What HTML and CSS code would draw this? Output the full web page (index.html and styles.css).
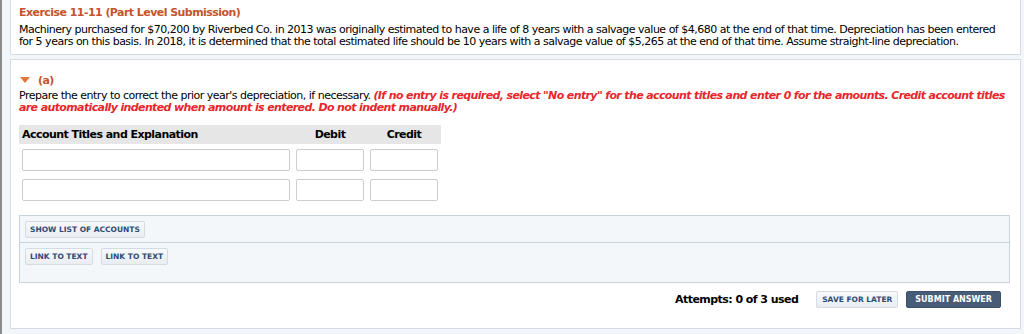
FILE: index.html
```html
<!DOCTYPE html>
<html lang="en">

<head>
    <meta charset="UTF-8">
    <title>Exercise 11-11</title>
    <link rel="stylesheet" href="styles.css">
</head>

<body>
    <div class="page">
        <div class="panel intro">
            <h3 class="title">Exercise 11-11 (Part Level Submission)</h3>
            <p class="text">Machinery purchased for $70,200 by Riverbed Co. in 2013 was originally estimated to have a life of 8 years with a salvage value of $4,680 at the end of that time. Depreciation has been entered for 5 years on this basis. In 2018, it is determined that the total estimated life should be 10 years with a salvage value of $5,265 at the end of that time. Assume straight-line depreciation.</p>
        </div>

        <div class="panel part">
            <div class="part-head">
                <span class="arrow"></span>
                <span class="part-label">(a)</span>
            </div>
            <p class="text">Prepare the entry to correct the prior year's depreciation, if necessary. <em class="warn">(If no entry is required, select "No entry" for the account titles and enter 0 for the amounts. Credit account titles are automatically indented when amount is entered. Do not indent manually.)</em></p>

            <div class="journal">
                <div class="jhead">
                    <div class="jcol-acc">Account Titles and Explanation</div>
                    <div class="jcol-num">Debit</div>
                    <div class="jcol-num">Credit</div>
                </div>
                <div class="jrow">
                    <input type="text" class="inp">
                    <input type="text" class="inp">
                    <input type="text" class="inp">
                </div>
                <div class="jrow">
                    <input type="text" class="inp">
                    <input type="text" class="inp">
                    <input type="text" class="inp">
                </div>
            </div>

            <div class="tools">
                <div class="tools-row">
                    <button class="btn">SHOW LIST OF ACCOUNTS</button>
                </div>
                <div class="tools-row last">
                    <button class="btn">LINK TO TEXT</button>
                    <button class="btn">LINK TO TEXT</button>
                </div>
            </div>

            <div class="submit-bar">
                <span class="attempts">Attempts: 0 of 3 used</span>
                <button class="btn save">SAVE FOR LATER</button>
                <button class="btn submit">SUBMIT ANSWER</button>
            </div>
        </div>
    </div>
</body>

</html>
```

FILE: styles.css
```css
* {
    padding: 0;
    margin: 0;
    box-sizing: border-box;
}

body {
    background-color: #f3f6f9;
    font-family: "DejaVu Sans", Verdana, sans-serif;
    font-size: 11px;
    letter-spacing: -0.55px;
    color: #000;
}

.page {
    border-left: 2px solid #8c8c8c;
    padding: 0 3px 0 8px;
    min-height: 334px;
}

.panel {
    background-color: #fff;
    border: 1px solid #d3dbe5;
}

.intro {
    border-top: 0;
    padding: 6px 12px 6px 8px;
}

.title {
    font-size: 11px;
    font-weight: bold;
    color: #c5532c;
    line-height: 14px;
    margin-bottom: 4px;
}

.text {
    line-height: 12px;
    letter-spacing: -0.5px;
}

.part {
    margin-top: 4px;
    padding: 13px 10px 20px 8px;
}

.part-head {
    display: flex;
    align-items: center;
    gap: 8px;
    padding-left: 1px;
    height: 14px;
    margin-bottom: 3px;
}

.arrow {
    width: 0;
    height: 0;
    border-left: 5px solid transparent;
    border-right: 5px solid transparent;
    border-top: 6px solid #e5733c;
}

.part-label {
    font-weight: bold;
    color: #c5532c;
}

.warn {
    color: #e8262b;
    font-weight: bold;
    letter-spacing: -0.62px;
}

/* journal table */
.journal {
    width: 422px;
    margin-top: 11px;
}

.jhead {
    display: grid;
    grid-template-columns: 274px 74px 74px;
    background-color: #e6e6e6;
    height: 19px;
    line-height: 19px;
    font-weight: bold;
}

.jcol-acc {
    padding-left: 3px;
}

.jcol-num {
    text-align: center;
}

.jrow {
    display: grid;
    grid-template-columns: 274px 74px 74px;
    padding-top: 5px;
    height: 30px;
}

.inp {
    height: 22px;
    margin: 0 3px;
    border: 1px solid #cdcdcd;
    border-radius: 2px;
    background: #fff;
}

/* toolbox */
.tools {
    margin-top: 11px;
    background-color: #f4f7fa;
    border: 1px solid #c9d3de;
}

.tools-row {
    display: flex;
    gap: 8px;
    padding: 5px 5px 4px 5px;
    border-bottom: 1px solid #c9d3de;
}

.tools-row.last {
    border-bottom: 0;
    height: 39px;
}

.btn {
    font-family: "DejaVu Sans", Verdana, sans-serif;
    font-size: 7.5px;
    font-weight: bold;
    letter-spacing: 0;
    color: #2e4a73;
    height: 17px;
    padding: 0 4px;
    background: linear-gradient(#f8f9fb, #e9edf1);
    border: 1px solid #d5dbe2;
    border-radius: 2px;
}

.submit-bar {
    display: flex;
    justify-content: flex-end;
    align-items: center;
    margin-top: 7px;
    padding-right: 9px;
    height: 18px;
}

.attempts {
    font-weight: bold;
    margin-right: 18px;
}

.save {
    padding: 0 5px;
    margin-right: 8px;
}

.submit {
    color: #fff;
    background: #475d77;
    border-color: #3c5069;
    padding: 0 8px;
    font-size: 8px;
}
```
